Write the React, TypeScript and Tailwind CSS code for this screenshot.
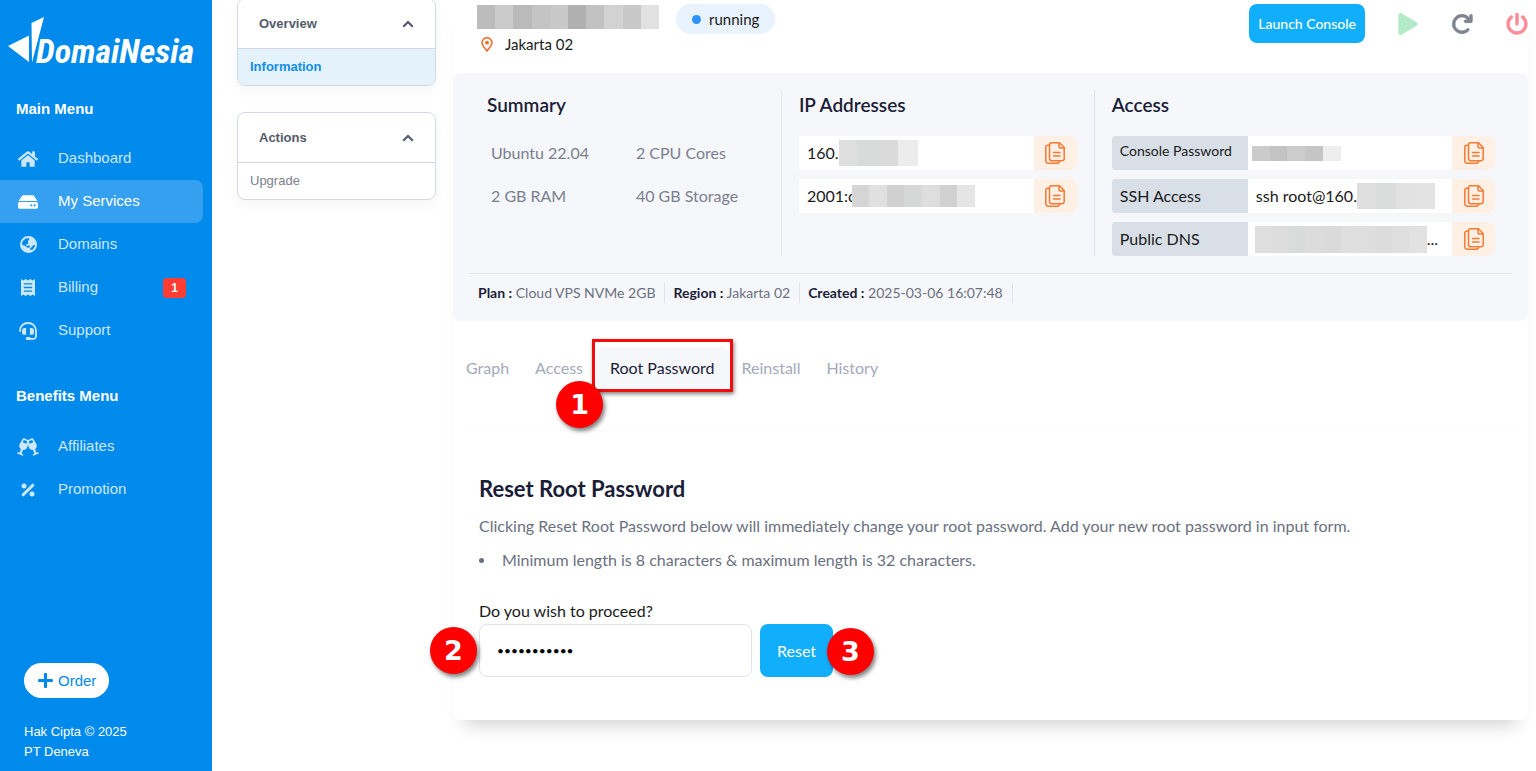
import React from "react";
import { FaHome, FaHdd, FaGlassCheers, FaPlay, FaPowerOff, FaPlus } from "react-icons/fa";
import { FaArrowRotateRight } from "react-icons/fa6";

type IconProps = { className?: string };

const Globe = ({ className }: IconProps) => (
  <svg viewBox="0 0 24 24" className={className} aria-hidden="true">
    <path
      fill="currentColor"
      fillRule="evenodd"
      d="M12 0a12 12 0 1 0 0 24 12 12 0 0 0 0-24ZM12 2.800c1.500 1 1.200 2.700 0 3.700-1 .800-1.300 1.500-.500 2.500.800 1 .400 2-1 2.200-1.800.200-2.500 1.300-1.700 2.300.600.800 1.800.500 2.700 0 1.300-.600 2.500 0 2.500 1.500 0 1-.800 1.500-2 1.500-2.500 0-3.300-2-5.300-2.700C4.500 13 3 12.500 2.600 11.500A9.400 9.400 0 0 1 12 2.800ZM21.400 12.500A9.400 9.400 0 0 1 18 19.300h-3.500c-.800-.800-.300-1.800.700-2.300 1.500-.700.500-2.200 2-2.700 1.300-.500 2.200-1.600 4.200-1.800Z"
    />
  </svg>
);

const Receipt = ({ className }: IconProps) => (
  <svg viewBox="0 0 20 24" className={className} aria-hidden="true">
    <path
      fill="currentColor"
      fillRule="evenodd"
      d="M0 0l3.300 2L6.600 0 10 2l3.400-2 3.300 2L20 0v24l-3.300-2-3.300 2-3.400-2-3.400 2-3.300-2L0 24ZM4 6v1.800h12V6Zm0 5.100v1.800h12v-1.800Zm0 5.100V18h12v-1.800Z"
    />
  </svg>
);

const Headset = ({ className }: IconProps) => (
  <svg viewBox="0 0 24 24" className={className} fill="none" stroke="currentColor" aria-hidden="true">
    <path strokeWidth="2.400" d="M1.300 13v-1.500a10.700 10.200 0 0 1 21.400 0V19a3.500 3.500 0 0 1-3.500 3.500H13" />
    <path fill="currentColor" stroke="none" d="M9.500 8v9H7.500A3.500 3.500 0 0 1 4 13.500v-2A3.500 3.500 0 0 1 7.500 8ZM14.500 8v9h2a3.500 3.500 0 0 0 3.500-3.500v-2A3.500 3.500 0 0 0 16.500 8Z" />
    <path fill="currentColor" stroke="none" d="M11 20H15v4h-4a2 2 0 0 1 0-4Z" />
  </svg>
);

const Percent = ({ className }: IconProps) => (
  <svg viewBox="0 0 14 14" className={className} aria-hidden="true">
    <circle cx="3" cy="3" r="2.500" fill="currentColor" />
    <circle cx="11" cy="11" r="2.500" fill="currentColor" />
    <path d="M2.200 11.800 11.800 2.200" stroke="currentColor" strokeWidth="3" strokeLinecap="round" />
  </svg>
);

const Pin = () => (
  <svg viewBox="0 0 12 15" className="h-[15px] w-3" fill="none" stroke="#f4692a" strokeWidth="1.500" aria-hidden="true">
    <path d="M6 14C4.500 11.500 1 8.800 1 5.700a5 5 0 0 1 10 0C11 8.800 7.500 11.500 6 14Z" strokeLinejoin="round" />
    <circle cx="6" cy="5.700" r="1.900" fill="#f4692a" stroke="none" />
  </svg>
);

const CopyIcon = () => (
  <svg viewBox="0 0 20 22" className="h-[22px] w-5" fill="none" stroke="#f57a33" strokeWidth="1.500" strokeLinejoin="round" strokeLinecap="round" aria-hidden="true">
    <path d="M4.500 3.200H3A2.200 2.200 0 0 0 .800 5.400V19A2.200 2.200 0 0 0 3 21.200h9.500a2.200 2.200 0 0 0 2.200-2.200" />
    <path d="M6.700.800h7.800l4.700 4.700V16.500a2.200 2.200 0 0 1-2.200 2.200H6.700a2.200 2.200 0 0 1-2.200-2.200V3A2.200 2.200 0 0 1 6.700.800Z" />
    <path d="M14 1v3.800a1.200 1.200 0 0 0 1.200 1.200H19M8.500 10.500h6.500M8.500 14h6.500" />
  </svg>
);

const Chevron = () => (
  <svg viewBox="0 0 12 8" className="h-2 w-3" fill="none" stroke="#555b6b" strokeWidth="2.200" aria-hidden="true">
    <path d="M1.200 6.800 6 2l4.800 4.800" />
  </svg>
);

const Logo = () => (
  <svg viewBox="0 0 200 60" className="h-[60px] w-[200px]" role="img" aria-label="DomaiNesia">
    <path fill="#fff" d="M0 30 21 19.500V46Z" />
    <path fill="#fff" d="M23.500 7 36 1 24 46.500Z" />
    <text x="28" y="47" fill="#fff" fontSize="34" fontWeight="700" fontStyle="italic" fontFamily="'Roboto Condensed','Open Sans Condensed',sans-serif">
      DomaiNesia
    </text>
  </svg>
);

type NavItemProps = { icon: React.ReactNode; label: string; active?: boolean; badge?: string };

const NavItem = ({ icon, label, active, badge }: NavItemProps) => (
  <li>
    <a
      href="#"
      className={
        active
          ? "flex h-[43px] items-center rounded-r-lg bg-[#359ff0] pr-[17px] pl-[18px] text-white"
          : "flex h-[43px] items-center pr-[17px] pl-[18px] text-[#cde8fd]"
      }
    >
      <span className="flex w-5 justify-center">{icon}</span>
      <span className="ml-5 flex-1">{label}</span>
      {badge && (
        <span className="flex h-5 w-[23px] items-center justify-center rounded bg-[#ff3d35] text-[12px] font-bold text-white">{badge}</span>
      )}
    </a>
  </li>
);

const Mosaic = ({ colors, className }: { colors: string[]; className: string }) => (
  <span className={"flex shrink-0 " + className} aria-hidden="true">
    {colors.map((c, i) => (
      <span key={i} className="flex-1" style={{ backgroundColor: c }} />
    ))}
  </span>
);

const SideCard = ({ title, item, active }: { title: string; item: string; active?: boolean }) => (
  <section className="overflow-hidden rounded-lg border border-[#d3d9e4] bg-white shadow-[0_6px_14px_rgba(0,0,0,0.04)]">
    <button type="button" className="flex h-[50px] w-full items-center justify-between border-b border-[#d3d9e4] px-[21px] font-bold text-[#555b6b]">
      {title}
      <Chevron />
    </button>
    <a
      href="#"
      className={active ? "flex h-9 items-center bg-[#e4f2fc] px-3 font-bold text-[#118eea]" : "flex h-9 items-center px-3 text-[#7b818c]"}
    >
      {item}
    </a>
  </section>
);

const CopyButton = ({ label }: { label: string }) => (
  <button type="button" aria-label={label} className="flex w-[43px] shrink-0 items-center justify-center rounded-r-lg bg-[#fef0e4]">
    <CopyIcon />
  </button>
);

const AccessRow = ({ label, small, children }: { label: string; small?: boolean; children: React.ReactNode }) => (
  <div className="flex h-[34px]">
    <span
      className={
        small
          ? "w-[136px] shrink-0 rounded-l bg-[#d9dfe7] pt-[3px] pl-2 text-[14px] leading-6"
          : "w-[136px] shrink-0 rounded-l bg-[#d9dfe7] pl-2 leading-[34px]"
      }
    >
      {label}
    </span>
    <div className="flex min-w-0 flex-1 items-center bg-white">{children}</div>
    <CopyButton label={"Copy " + label} />
  </div>
);

const Meta = ({ name, value }: { name: string; value: string }) => (
  <span className="border-r border-[#dfe2e8] pr-[9px] pl-2 text-[#6b7080]">
    <b className="font-bold text-[#1b1d38]">{name} :</b> {value}
  </span>
);

const Step = ({ n, className }: { n: number; className: string }) => (
  <span
    className={
      "absolute z-10 flex size-[47px] items-center justify-center rounded-full bg-[#fe0000] font-['DejaVu_Sans'] text-[27px] font-bold text-white shadow-[2px_3px_4px_rgba(0,0,0,0.5)] " +
      className
    }
  >
    {n}
  </span>
);

const tabs = ["Graph", "Access", "Root Password", "Reinstall", "History"];

export default function App() {
  return (
    <div className="flex min-h-screen overflow-hidden bg-white">
      <aside className="flex w-[212px] shrink-0 flex-col bg-[#008aeb] font-['Liberation_Sans',sans-serif] text-[15px]">
        <a href="#" className="mt-4 ml-2 block w-[200px]">
          <Logo />
        </a>
        <h2 className="mt-[23px] ml-4 leading-5 font-bold text-white">Main Menu</h2>
        <ul className="mt-[18px] mr-[9px]">
          <NavItem icon={<FaHome className="size-5" />} label="Dashboard" />
          <NavItem icon={<FaHdd className="size-5" />} label="My Services" active />
          <NavItem icon={<Globe className="size-[17px]" />} label="Domains" />
          <NavItem icon={<Receipt className="h-[17px] w-[14px]" />} label="Billing" badge="1" />
          <NavItem icon={<Headset className="size-[18px]" />} label="Support" />
        </ul>
        <h2 className="mt-[34px] ml-4 leading-5 font-bold text-white">Benefits Menu</h2>
        <ul className="mt-[19px] mr-[9px]">
          <NavItem icon={<FaGlassCheers className="size-[22px] shrink-0" />} label="Affiliates" />
          <NavItem icon={<Percent className="size-[14px]" />} label="Promotion" />
        </ul>
        <div className="mt-auto px-6 pb-[9px] text-[13px] leading-5 text-white">
          <button type="button" className="flex h-[35px] items-center gap-1 rounded-full bg-white px-[13px] text-[15px] text-[#008aeb]">
            <FaPlus className="size-[17px]" />
            Order
          </button>
          <p className="mt-[24px]">
            Hak Cipta © 2025
            <br />
            PT Deneva
          </p>
        </div>
      </aside>

      <nav className="-mt-0.5 ml-[25px] flex w-[199px] shrink-0 flex-col gap-[26px] font-['Liberation_Sans',sans-serif] text-[13px]">
        <SideCard title="Overview" item="Information" active />
        <SideCard title="Actions" item="Upgrade" />
      </nav>

      <main className="mr-2 mb-[51px] ml-[17px] min-w-0 flex-1 self-start rounded-b-lg pb-[43px] font-['Lato',sans-serif] text-[16px] leading-6 text-[#1a1a1a] shadow-[0_16px_18px_-12px_rgba(0,0,0,0.2)]">
        <header className="flex h-[73px] items-start justify-between pt-1 pl-6">
          <div>
            <div className="flex gap-[17px]">
              <Mosaic
                className="mt-px h-6 w-[182px]"
                colors={["#bcbcbd", "#cbcbcb", "#bababa", "#c4c4c4", "#c8c8c8", "#b0b0b0", "#c2c2c3", "#d2d2d2", "#c8c8c8", "#e1e1e1"]}
              />
              <span className="flex h-[30px] items-center gap-2 rounded-full bg-[#e8f3fe] px-4 text-[15px]">
                <span className="size-[9px] rounded-full bg-[#2b93f5]" />
                running
              </span>
            </div>
            <p className="flex items-center gap-3 pl-1 text-[15px] leading-5">
              <Pin />
              Jakarta 02
            </p>
          </div>
          <div className="flex h-[39px] items-center">
            <button type="button" className="h-full rounded-lg bg-[#11affb] px-[9px] text-[14px] font-medium text-white">
              Launch Console
            </button>
            <button type="button" aria-label="Start" className="ml-[33px] text-[#b4eac8]">
              <FaPlay className="h-[22px] w-5" />
            </button>
            <button type="button" aria-label="Restart" className="ml-[33px] text-[#80848f]">
              <FaArrowRotateRight className="size-[22px]" stroke="currentColor" strokeWidth="16" />
            </button>
            <button type="button" aria-label="Power off" className="ml-[33px] text-[#fa8e98]">
              <FaPowerOff className="size-[22px]" />
            </button>
          </div>
        </header>

        <section className="rounded-lg bg-[#f6f7fa] px-4 pt-[17px] pb-[18px]">
          <div className="grid grid-cols-[3fr_3fr_4fr]">
            <div className="border-r border-[#e6e8ec] pl-[18px]">
              <h3 className="text-[19px] leading-[30px] font-semibold text-[#1b1d38]">Summary</h3>
              <div className="mt-4 grid grid-cols-2 gap-y-[9px] pl-1 leading-[34px] text-[#7a8090]">
                <span>Ubuntu 22.04</span>
                <span>2 CPU Cores</span>
                <span>2 GB RAM</span>
                <span>40 GB Storage</span>
              </div>
            </div>
            <div className="border-r border-[#dcdfe5] px-[17px]">
              <h3 className="text-[19px] leading-[30px] font-semibold text-[#1b1d38]">IP Addresses</h3>
              <div className="mt-4 flex flex-col gap-[9px]">
                <div className="flex h-[34px]">
                  <div className="flex flex-1 items-center bg-white pl-2">
                    160.
                    <Mosaic className="h-[26px] w-[79px]" colors={["#dedede", "#d9dbda", "#dadada", "#ececec"]} />
                  </div>
                  <CopyButton label="Copy IPv4 address" />
                </div>
                <div className="flex h-[34px]">
                  <div className="flex flex-1 items-center bg-white pl-2">
                    <span>2001:c</span>
                    <Mosaic className="z-10 -ml-1 h-[22px] w-[123px]" colors={["#d5d5d5", "#e0e0e0", "#d0d0d0", "#d6d8d7", "#dedede", "#d1d1d1", "#e5e5e5"]} />
                  </div>
                  <CopyButton label="Copy IPv6 address" />
                </div>
              </div>
            </div>
            <div className="px-[17px]">
              <h3 className="text-[19px] leading-[30px] font-semibold text-[#1b1d38]">Access</h3>
              <div className="mt-4 flex flex-col gap-[9px]">
                <AccessRow label="Console Password" small>
                  <Mosaic className="ml-1 h-[15px] w-[89px]" colors={["#cbcbcb", "#c3c3c4", "#cccccc", "#c5c5c6", "#eeeeee"]} />
                </AccessRow>
                <AccessRow label="SSH Access">
                  <span className="pl-2">ssh root@160.</span>
                  <Mosaic className="h-[26px] w-[78px]" colors={["#dedede", "#dadcdb", "#e2e2e2", "#e3e3e3"]} />
                </AccessRow>
                <AccessRow label="Public DNS">
                  <Mosaic className="ml-[7px] h-[27px] w-[172px]" colors={["#dedede", "#dddddd", "#d9dbda", "#dcdcdc", "#dadada", "#e0dfe0", "#dedede", "#dcdcdc", "#dfdfdf", "#e2e2e2"]} />
                  <span>...</span>
                </AccessRow>
              </div>
            </div>
          </div>
          <div className="mt-[17px] flex border-t border-[#e4e6ea] pt-[9px] pl-px text-[14px] leading-5">
            <Meta name="Plan" value="Cloud VPS NVMe 2GB" />
            <Meta name="Region" value="Jakarta 02" />
            <Meta name="Created" value="2025-03-06 16:07:48" />
          </div>
        </section>

        <div className="mx-[13px] flex h-[110px] items-start border-b border-[#fafafa] pt-[26px]">
          {tabs.map((t) =>
            t === "Root Password" ? (
              <div key={t} className="relative">
                <button type="button" className="h-[42px] rounded-lg bg-[#f6f7fa] px-[14px] text-[#1b1d38]">
                  {t}
                </button>
                <span className="pointer-events-none absolute -inset-x-1 -top-2 h-[53px] border-3 border-[#f20d0d] shadow-[1px_2px_4px_rgba(0,0,0,0.5)]" />
                <Step n={1} className="top-[34px] -left-10" />
              </div>
            ) : (
              <button key={t} type="button" className={t === "Graph" ? "h-[42px] pr-[13px] text-[#a3aabb]" : "h-[42px] px-[13px] text-[#a3aabb]"}>
                {t}
              </button>
            ),
          )}
        </div>

        <section className="px-[26px] pt-[43px]">
          <h2 className="text-[22px] leading-[30px] font-bold text-[#1b1d38]">Reset Root Password</h2>
          <p className="mt-2.5 text-[#6b7080]">
            Clicking Reset Root Password below will immediately change your root password. Add your new root password in input form.
          </p>
          <ul className="mt-2.5 text-[#6b7080]">
            <li className="flex items-center gap-[18px] before:size-[5px] before:rounded-full before:bg-[#6b7080]">
              Minimum length is 8 characters &amp; maximum length is 32 characters.
            </li>
          </ul>
          <form className="mt-[27px]" onSubmit={(e) => e.preventDefault()}>
            <label htmlFor="root-password" className="block">
              Do you wish to proceed?
            </label>
            <div className="relative mt-px flex gap-2">
              <input
                id="root-password"
                type="password"
                defaultValue="rootpass123"
                className="h-[53px] w-[273px] rounded-lg border border-[#e1e2ec] bg-white px-[17px] text-[12px] text-black outline-none"
              />
              <button type="submit" className="h-[53px] rounded-lg bg-[#11affb] px-[17px] text-white">
                Reset
              </button>
              <Step n={2} className="top-[3px] -left-[49px]" />
              <Step n={3} className="top-1 left-[348px]" />
            </div>
          </form>
        </section>
      </main>
    </div>
  );
}
